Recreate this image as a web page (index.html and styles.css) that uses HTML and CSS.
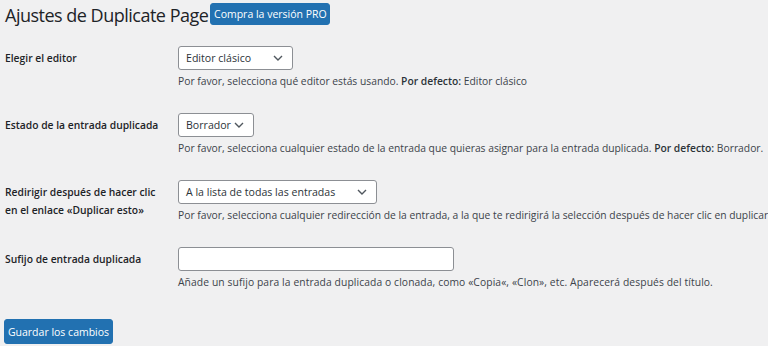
FILE: index.html
```html
<!DOCTYPE html>
<html lang="es">
<head>
<meta charset="utf-8">
<title>Ajustes de Duplicate Page</title>
<link rel="stylesheet" href="styles.css">
</head>
<body>
<div class="wrap">
  <div class="head">
    <h1 class="title">Ajustes de Duplicate Page</h1>
    <a class="btn btn-pro" href="#">Compra la versión PRO</a>
  </div>
  <form class="form">
    <div class="row row-1">
      <div class="label">Elegir el editor</div>
      <div class="field">
        <div class="select sel-editor"><span>Editor clásico</span><svg class="chev" viewBox="0 0 10 6" width="10" height="6"><path d="M1 1l4 4 4-4" fill="none" stroke="#50575e" stroke-width="1.4"/></svg></div>
        <p class="desc">Por favor, selecciona qué editor estás usando. <b>Por defecto:</b> Editor clásico</p>
      </div>
    </div>
    <div class="row">
      <div class="label">Estado de la entrada duplicada</div>
      <div class="field">
        <div class="select sel-status"><span>Borrador</span><svg class="chev" viewBox="0 0 10 6" width="10" height="6"><path d="M1 1l4 4 4-4" fill="none" stroke="#50575e" stroke-width="1.4"/></svg></div>
        <p class="desc">Por favor, selecciona cualquier estado de la entrada que quieras asignar para la entrada duplicada. <b>Por defecto:</b> Borrador.</p>
      </div>
    </div>
    <div class="row">
      <div class="label">Redirigir después de hacer clic<br>en el enlace «Duplicar esto»</div>
      <div class="field">
        <div class="select sel-redirect"><span>A la lista de todas las entradas</span><svg class="chev" viewBox="0 0 10 6" width="10" height="6"><path d="M1 1l4 4 4-4" fill="none" stroke="#50575e" stroke-width="1.4"/></svg></div>
        <p class="desc">Por favor, selecciona cualquier redirección de la entrada, a la que te redirigirá la selección después de hacer clic en duplicar esto.</p>
      </div>
    </div>
    <div class="row">
      <div class="label">Sufijo de entrada duplicada</div>
      <div class="field">
        <div class="input"></div>
        <p class="desc desc-wide">Añade un sufijo para la entrada duplicada o clonada, como «Copia«, «Clon», etc. Aparecerá después del título.</p>
      </div>
    </div>
    <div class="actions">
      <a class="btn btn-save" href="#">Guardar los cambios</a>
    </div>
  </form>
</div>
</body>
</html>
```
FILE: styles.css
```css
html, body {
  margin: 0;
  padding: 0;
  background: #f0f0f1;
  overflow: hidden;
}
body {
  font-family: "Open Sans", "Noto Sans", sans-serif;
  font-size: 10.3px;
  color: #2c3338;
  width: 768px;
  height: 346px;
}
.wrap {
  padding: 2px 0 0 5px;
}
.head {
  display: flex;
  align-items: flex-start;
}
.title {
  margin: 0;
  font-weight: 400;
  font-size: 18px;
  line-height: 26px;
  color: #1d2327;
  letter-spacing: -0.5px;
  white-space: nowrap;
}
.btn {
  display: inline-flex;
  align-items: center;
  justify-content: center;
  background: #2271b1;
  color: #fff;
  text-decoration: none;
  border: 1px solid #2271b1;
  border-radius: 3px;
  box-sizing: border-box;
  font-size: 10.5px;
  white-space: nowrap;
}
.btn-pro {
  margin-left: 2px;
  margin-top: 1px;
  width: 120px;
  height: 22px;
}
.form {
  margin-top: 18px;
}
.row {
  display: grid;
  grid-template-columns: 173px 1fr;
  height: 67px;
}
.label {
  font-weight: 600;
  color: #1d2327;
  line-height: 18px;
  padding-top: 3px;
  white-space: nowrap;
}
.field {
  display: flex;
  flex-direction: column;
  align-items: flex-start;
  white-space: nowrap;
}
.select {
  box-sizing: border-box;
  height: 24px;
  border: 1px solid #8c8f94;
  border-radius: 3px;
  background: #fff;
  display: flex;
  align-items: center;
  justify-content: space-between;
  padding: 0 9px 0 7px;
  color: #2c3338;
  font-size: 10.6px;
}
.sel-editor { width: 115px; }
.sel-status { width: 76px; }
.sel-redirect { width: 199px; }
.input {
  box-sizing: border-box;
  width: 276px;
  height: 24px;
  border: 1px solid #8c8f94;
  border-radius: 3px;
  background: #fff;
}
.desc {
  margin: 4px 0 0;
  line-height: 15px;
  color: #3c434a;
}
.desc-wide {
  letter-spacing: 0.1px;
}
.desc b {
  font-weight: 600;
  color: #2c3338;
}
.actions {
  padding-top: 5px;
}
.btn-save {
  margin-left: -1px;
  width: 109px;
  height: 25px;
}
```
